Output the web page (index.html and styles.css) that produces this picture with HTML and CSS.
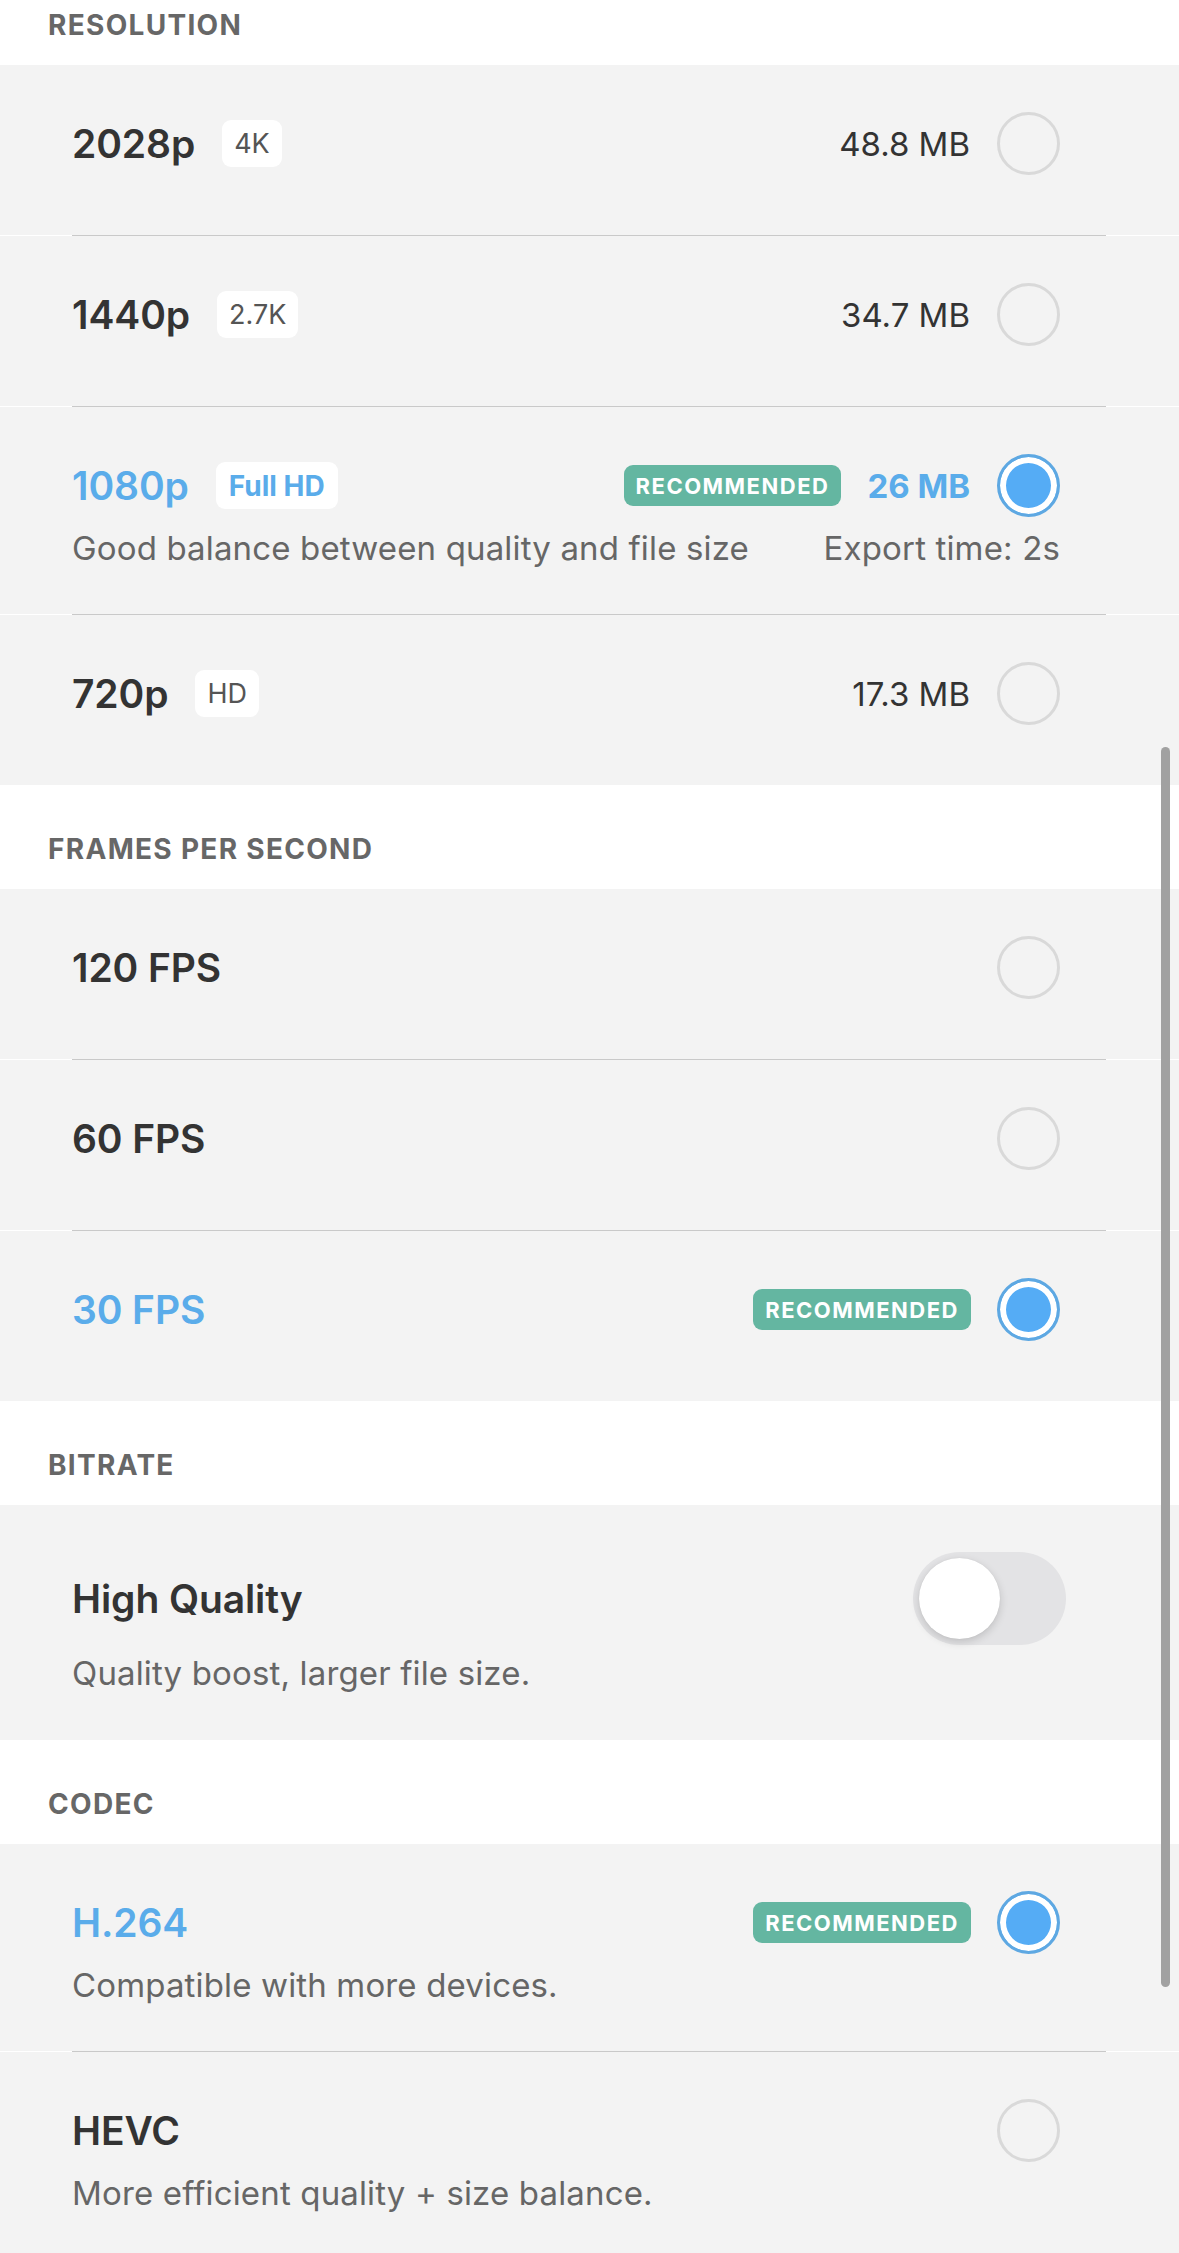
FILE: index.html
```html
<!DOCTYPE html>
<html lang="en">
<head>
<meta charset="utf-8">
<title>Export settings</title>
<link rel="stylesheet" href="styles.css">
</head>
<body>
<div class="screen">
  <section class="group">
    <h2 class="section-header">RESOLUTION</h2>
    <div class="row">
      <div class="row-inner">
        <div class="line">
          <span class="title">2028p</span><span class="chip">4K</span>
          <div class="right"><span class="size">48.8 MB</span><span class="radio"></span></div>
        </div>
      </div>
    </div>
    <div class="row">
      <div class="row-inner">
        <div class="line">
          <span class="title">1440p</span><span class="chip">2.7K</span>
          <div class="right"><span class="size">34.7 MB</span><span class="radio"></span></div>
        </div>
      </div>
    </div>
    <div class="row">
      <div class="row-inner two">
        <div class="line">
          <span class="title blue">1080p</span><span class="chip chip-blue">Full HD</span>
          <div class="right"><span class="badge">RECOMMENDED</span><span class="size size-blue">26 MB</span><span class="radio on"></span></div>
        </div>
        <div class="sub-line"><span>Good balance between quality and file size</span><span>Export time: 2s</span></div>
      </div>
    </div>
    <div class="row">
      <div class="row-inner">
        <div class="line">
          <span class="title">720p</span><span class="chip">HD</span>
          <div class="right"><span class="size">17.3 MB</span><span class="radio"></span></div>
        </div>
      </div>
    </div>
  </section>

  <section class="group">
    <h2 class="section-header">FRAMES PER SECOND</h2>
    <div class="row">
      <div class="row-inner">
        <div class="line">
          <span class="title">120 FPS</span>
          <div class="right"><span class="radio"></span></div>
        </div>
      </div>
    </div>
    <div class="row">
      <div class="row-inner">
        <div class="line">
          <span class="title">60 FPS</span>
          <div class="right"><span class="radio"></span></div>
        </div>
      </div>
    </div>
    <div class="row">
      <div class="row-inner">
        <div class="line">
          <span class="title blue">30 FPS</span>
          <div class="right"><span class="badge">RECOMMENDED</span><span class="radio on"></span></div>
        </div>
      </div>
    </div>
  </section>

  <section class="group">
    <h2 class="section-header">BITRATE</h2>
    <div class="row">
      <div class="row-inner toggle-row">
        <div class="line line-tall">
          <span class="title">High Quality</span>
          <div class="right"><span class="toggle"><span class="knob"></span></span></div>
        </div>
        <div class="sub-line sub-tight"><span>Quality boost, larger file size.</span></div>
      </div>
    </div>
  </section>

  <section class="group">
    <h2 class="section-header">CODEC</h2>
    <div class="row">
      <div class="row-inner two">
        <div class="line">
          <span class="title blue">H.264</span>
          <div class="right"><span class="badge">RECOMMENDED</span><span class="radio on"></span></div>
        </div>
        <div class="sub-line"><span>Compatible with more devices.</span></div>
      </div>
    </div>
    <div class="row">
      <div class="row-inner two">
        <div class="line">
          <span class="title">HEVC</span>
          <div class="right"><span class="radio"></span></div>
        </div>
        <div class="sub-line"><span>More efficient quality + size balance.</span></div>
      </div>
    </div>
  </section>
</div>
<div class="scrollbar"></div>
</body>
</html>
```

FILE: styles.css
```css
html, body {
  margin: 0;
  padding: 0;
  background: #ffffff;
  overflow: hidden;
}

body {
  font-family: Inter, Lato, "Noto Sans", sans-serif;
  color: #333333;
}

.screen {
  width: 1179px;
  margin-top: -38px;
}

.group {
  background: #ffffff;
}

.section-header {
  margin: 0;
  padding: 48px 0 25px 48px;
  height: 30px;
  line-height: 30px;
  font-size: 28px;
  font-weight: 700;
  color: #676767;
  letter-spacing: 1.3px;
}

.row {
  background: #f3f3f3;
  padding: 0 73px 0 72px;
  border-bottom: 1px solid #ffffff;
}

.row-inner {
  padding: 47px 46px 60px 0;
  border-bottom: 1px solid #c9c9c9;
  margin-bottom: -1px;
}

.row:last-child .row-inner {
  border-bottom-color: transparent;
}

.row-inner.two {
  padding-bottom: 46px;
}

.row-inner.toggle-row {
  padding-bottom: 47px;
}

.line {
  display: flex;
  align-items: center;
  height: 63px;
}

.line-tall {
  height: 93px;
}

.title {
  font-size: 39px;
  font-weight: 600;
  color: #333333;
  line-height: 50px;
  letter-spacing: -0.1px;
}

.blue {
  color: #5aacea;
}

.chip {
  margin-left: 27px;
  height: 47px;
  padding: 0 12px;
  border-radius: 9px;
  background: #ffffff;
  font-size: 27px;
  color: #555555;
  display: flex;
  align-items: center;
}

.chip-blue {
  color: #5aacea;
  font-weight: 700;
  font-size: 28px;
  padding: 0 13px;
}

.right {
  margin-left: auto;
  display: flex;
  align-items: center;
}

.size {
  font-size: 33px;
  color: #333333;
  margin-right: 27px;
}

.size-blue {
  color: #5aacea;
  font-weight: 700;
}

.badge {
  background: #64b6a1;
  color: #ffffff;
  font-size: 22px;
  font-weight: 700;
  letter-spacing: 1.5px;
  height: 41px;
  padding: 0 12px;
  border-radius: 9px;
  display: flex;
  align-items: center;
  margin-right: 26px;
}

.radio {
  width: 63px;
  height: 63px;
  box-sizing: border-box;
  border: 3px solid #d9d9d9;
  border-radius: 50%;
  flex: none;
}

.radio.on {
  border-color: #5ea8e2;
  background: #55acf5;
  box-shadow: inset 0 0 0 6px #ffffff;
}

.sub-line {
  display: flex;
  justify-content: space-between;
  margin-top: 11px;
  line-height: 40px;
  font-size: 33px;
  letter-spacing: 0.15px;
  color: #666666;
}

.sub-line.sub-tight {
  margin-top: 8px;
}

.toggle {
  width: 153px;
  height: 93px;
  box-sizing: border-box;
  padding: 6px;
  border-radius: 47px;
  background: #e3e3e5;
  margin-right: -6px;
  display: flex;
}

.knob {
  width: 81px;
  height: 81px;
  border-radius: 50%;
  background: #ffffff;
  box-shadow: 0 3px 8px rgba(0, 0, 0, 0.16), 0 0 1px rgba(0, 0, 0, 0.1);
}

.scrollbar {
  position: fixed;
  left: 1161px;
  top: 747px;
  width: 9px;
  height: 1240px;
  border-radius: 5px;
  background: #a1a1a1;
}
```
